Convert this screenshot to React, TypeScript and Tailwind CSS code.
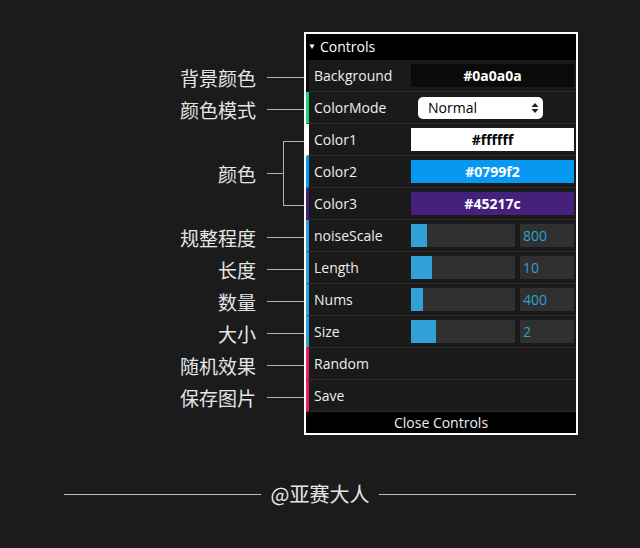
const cjk = { fontFamily: '"Noto Sans CJK SC", "Noto Sans", sans-serif' }
const gui = { fontFamily: '"Open Sans", "Liberation Sans", sans-serif' }

function Note({ text }: { text: string }) {
  return (
    <div className="flex h-[32px] items-center justify-end">
      <span className="text-[19px] leading-none text-[#e6e6e6]" style={cjk}>{text}</span>
      <div className="ml-[11px] h-px w-[37px] bg-[#b4b4b4]" />
    </div>
  )
}

function Row({ label, edge, children }: { label: string; edge: string; children?: React.ReactNode }) {
  return (
    <div className={`flex h-[32px] items-center border-b border-l-[3px] border-b-[#2c2c2c] bg-[#1a1a1a] pr-[2px] ${edge}`}>
      <div className="w-[102px] shrink-0 pl-[5px] text-[14px] text-[#eeeeee]">{label}</div>
      <div className="flex flex-1 items-center">{children}</div>
    </div>
  )
}

function Swatch({ hex, bg, fg }: { hex: string; bg: string; fg: string }) {
  return (
    <div className={`flex h-[23px] w-full items-center justify-center text-[14px] font-bold ${bg} ${fg}`}>{hex}</div>
  )
}

function Slider({ pct, value }: { pct: number; value: string }) {
  return (
    <div className="flex w-full items-center gap-[5px]">
      <div className="h-[23px] w-[104px] bg-[#303030]">
        <div className="h-full bg-[#2fa1d6]" style={{ width: `${pct}%` }} />
      </div>
      <div className="flex h-[23px] flex-1 items-center bg-[#303030] pl-[3px] text-[14px] text-[#2fa1d6]">{value}</div>
    </div>
  )
}

export default function App() {
  return (
    <div className="min-h-[548px] w-[640px] bg-[#1b1b1b] pt-[32px]">
      <div className="flex">
        {/* annotations */}
        <div className="flex w-[304px] flex-col pt-[29px]">
          <Note text="背景颜色" />
          <Note text="颜色模式" />
          <div className="flex h-[96px] items-center justify-end">
            <span className="text-[19px] leading-none text-[#e6e6e6]" style={cjk}>颜色</span>
            <div className="ml-[11px] h-px w-[16px] bg-[#b4b4b4]" />
            <div className="h-[65px] w-[21px] border-y border-l border-[#b4b4b4]" />
          </div>
          <Note text="规整程度" />
          <Note text="长度" />
          <Note text="数量" />
          <Note text="大小" />
          <Note text="随机效果" />
          <Note text="保存图片" />
        </div>

        {/* dat.gui panel */}
        <div className="w-[274px] border-2 border-white bg-black" style={gui}>
          <div className="flex h-[26px] items-center pb-[2px] pl-[2px] text-[14px] text-white">
            <span className="mr-[4px] text-[8px]">▼</span>Controls
          </div>
          <Row label="Background" edge="border-l-[#0a0a0a]">
            <Swatch hex="#0a0a0a" bg="bg-[#0a0a0a]" fg="text-white" />
          </Row>
          <Row label="ColorMode" edge="border-l-[#1ed36f]">
            <div className="ml-[7px] flex h-[22px] w-[125px] items-center justify-between rounded-[5px] bg-white pl-[10px] pr-[4px] text-[14px] text-black">
              <span>Normal</span>
              <svg width="8" height="12" viewBox="0 0 8 12">
                <path d="M4 1 L7.5 5 H0.5 Z" fill="#222" />
                <path d="M4 11 L7.5 7 H0.5 Z" fill="#222" />
              </svg>
            </div>
          </Row>
          <Row label="Color1" edge="border-l-white">
            <Swatch hex="#ffffff" bg="bg-white" fg="text-black" />
          </Row>
          <Row label="Color2" edge="border-l-[#0799f2]">
            <Swatch hex="#0799f2" bg="bg-[#0799f2]" fg="text-white" />
          </Row>
          <Row label="Color3" edge="border-l-[#45217c]">
            <Swatch hex="#45217c" bg="bg-[#45217c]" fg="text-white" />
          </Row>
          <Row label="noiseScale" edge="border-l-[#2fa1d6]">
            <Slider pct={15} value="800" />
          </Row>
          <Row label="Length" edge="border-l-[#2fa1d6]">
            <Slider pct={20} value="10" />
          </Row>
          <Row label="Nums" edge="border-l-[#2fa1d6]">
            <Slider pct={12} value="400" />
          </Row>
          <Row label="Size" edge="border-l-[#2fa1d6]">
            <Slider pct={24} value="2" />
          </Row>
          <Row label="Random" edge="border-l-[#e61d5f]" />
          <Row label="Save" edge="border-l-[#e61d5f]" />
          <div className="flex h-[21px] items-center justify-center text-[14px] text-[#eeeeee]">Close Controls</div>
        </div>
      </div>

      {/* footer */}
      <div className="mt-[49px] flex items-center px-[64px]">
        <div className="h-px flex-1 bg-[#bdbdbd]" />
        <span className="px-[10px] text-[20px] leading-none text-[#e6e6e6]" style={cjk}>@亚赛大人</span>
        <div className="h-px flex-1 bg-[#bdbdbd]" />
      </div>
    </div>
  )
}
